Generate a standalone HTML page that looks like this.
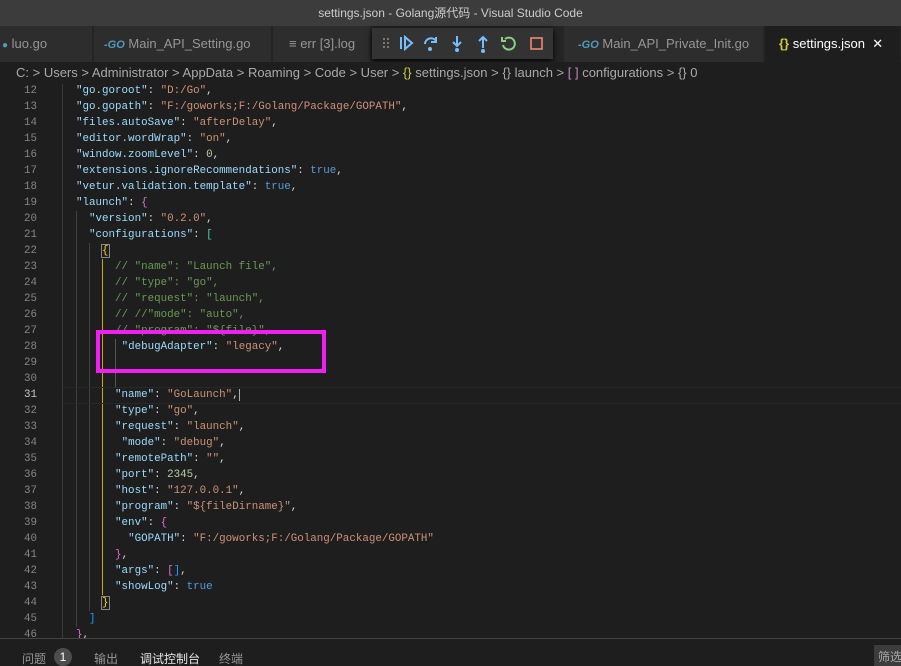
<!DOCTYPE html>
<html><head><meta charset="utf-8"><style>
*{margin:0;padding:0;box-sizing:border-box}
html,body{width:901px;height:666px;overflow:hidden}
body{background:#1e1e1e;position:relative;font-family:"Liberation Sans","Noto Sans CJK SC",sans-serif}
.title{position:absolute;left:0;top:0;width:901px;height:26px;background:#3c3c3c;color:#ccc;font-size:12px;text-align:center;line-height:26px}
.tabs{position:absolute;left:0;top:26px;width:901px;height:36px;background:#252526}
.tab{position:absolute;top:0;height:36px;line-height:36px;font-size:13px;color:#969696;background:#2d2d2d;border-right:1px solid #252526;white-space:nowrap;overflow:hidden}
.go{color:#519aba;font-weight:bold;font-size:11px;font-style:italic}
.crumb{position:absolute;left:0;top:62px;width:901px;height:22px;background:#1e1e1e;color:#a9a9a9;font-size:13px;line-height:22px;padding-left:16px;white-space:nowrap}
.dbg{position:absolute;left:372px;top:28px;width:181px;height:31px;background:#333;box-shadow:0 2px 6px #000}
.code{position:absolute;left:0;top:0;font-family:"Liberation Mono",monospace;font-size:10.85px}
.ln{position:absolute;left:0;width:37px;text-align:right;color:#858585;height:16px;line-height:16px}
.l{position:absolute;left:76px;height:16px;line-height:16px;color:#d4d4d4;white-space:pre}
.k{color:#9cdcfe}.s{color:#ce9178}.n{color:#b5cea8}.b{color:#569cd6}.c{color:#6a9955}.p{color:#da70d6}.y{color:#ffd700}.g{color:#179fff}
.guide{position:absolute;width:1px;background:#404040}
.panel{position:absolute;left:0;top:638px;width:901px;height:28px;background:#1e1e1e;border-top:1px solid #444;font-size:12px;color:#969696;overflow:hidden}
</style></head><body>
<div class="title">settings.json - Golang源代码 - Visual Studio Code</div>
<div class="tabs">
 <div class="tab" style="left:0;width:93px;padding-left:2px"><span class="go" style="font-size:10px">●</span> luo.go</div>
 <div class="tab" style="left:94px;width:178px;padding-left:10px"><span class="go">‑GO</span> Main_API_Setting.go</div>
 <div class="tab" style="left:273px;width:98px;padding-left:16px">≡ err [3].log</div>
 <div class="tab" style="left:564px;width:200px;padding-left:14px"><span class="go">‑GO</span> Main_API_Private_Init.go</div>
 <div class="tab" style="left:765px;width:136px;padding-left:14px;background:#1e1e1e;color:#fff"><span style="color:#cbcb41;font-weight:bold">{}</span> settings.json &nbsp;✕</div>
</div>
<div class="dbg">
<svg width="181" height="31" viewBox="0 0 181 31">
<g fill="#777"><rect x="11" y="10" width="2" height="2"/><rect x="15" y="10" width="2" height="2"/><rect x="11" y="14" width="2" height="2"/><rect x="15" y="14" width="2" height="2"/><rect x="11" y="18" width="2" height="2"/><rect x="15" y="18" width="2" height="2"/></g>
<g stroke="#75beff" stroke-width="2" fill="none">
<line x1="29" y1="9" x2="29" y2="21"/><path d="M33 9 L40 15 L33 21 Z"/>
<path d="M53 16 A6 6 0 0 1 64 13 M64 9 L64 14 L59 14"/>
<path d="M85 8 V18 M81 14 L85 18 L89 14"/>
<path d="M111 20 V10 M107 13 L111 9 L115 13"/>
</g>
<circle cx="58" cy="21" r="2" fill="#75beff"/><circle cx="85" cy="22" r="2" fill="#75beff"/><circle cx="111" cy="23" r="2" fill="#75beff"/>
<path d="M133 11 A6 6 0 1 1 131 17 M130 9 V13 H134" stroke="#89d185" stroke-width="2" fill="none"/>
<rect x="159" y="10" width="11" height="11" stroke="#f48771" stroke-width="1.6" fill="none"/>
</svg></div>
<div class="crumb">C: &gt; Users &gt; Administrator &gt; AppData &gt; Roaming &gt; Code &gt; User &gt; <span style="color:#cbcb41">{}</span> settings.json &gt; {} launch &gt; <span style="color:#c586c0">[ ]</span> configurations &gt; {} 0</div>

<div class="guide" style="left:62px;top:84px;height:554px;background:#3a3a3a"></div>
<div class="guide" style="left:76px;top:211px;height:416px"></div>
<div class="guide" style="left:89px;top:243px;height:368px"></div>
<div class="guide" style="left:102px;top:259px;height:336px;background:#c8a800"></div>
<div style="position:absolute;left:63px;top:387px;width:838px;height:17px;border-top:1px solid #282828;border-bottom:1px solid #282828"></div>

<div class="code">
<div class="ln" style="top:83px">12</div><div class="l" style="top:83px"><span class="k">"go.goroot"</span>: <span class="s">"D:/Go"</span>,</div>
<div class="ln" style="top:99px">13</div><div class="l" style="top:99px"><span class="k">"go.gopath"</span>: <span class="s">"F:/goworks;F:/Golang/Package/GOPATH"</span>,</div>
<div class="ln" style="top:115px">14</div><div class="l" style="top:115px"><span class="k">"files.autoSave"</span>: <span class="s">"afterDelay"</span>,</div>
<div class="ln" style="top:131px">15</div><div class="l" style="top:131px"><span class="k">"editor.wordWrap"</span>: <span class="s">"on"</span>,</div>
<div class="ln" style="top:147px">16</div><div class="l" style="top:147px"><span class="k">"window.zoomLevel"</span>: <span class="n">0</span>,</div>
<div class="ln" style="top:163px">17</div><div class="l" style="top:163px"><span class="k">"extensions.ignoreRecommendations"</span>: <span class="b">true</span>,</div>
<div class="ln" style="top:179px">18</div><div class="l" style="top:179px"><span class="k">"vetur.validation.template"</span>: <span class="b">true</span>,</div>
<div class="ln" style="top:195px">19</div><div class="l" style="top:195px"><span class="k">"launch"</span>: <span class="p">{</span></div>
<div class="ln" style="top:211px">20</div><div class="l" style="top:211px">  <span class="k">"version"</span>: <span class="s">"0.2.0"</span>,</div>
<div class="ln" style="top:227px">21</div><div class="l" style="top:227px">  <span class="k">"configurations"</span>: <span style="color:#4ec9b0">[</span></div>
<div class="ln" style="top:243px">22</div><div class="l" style="top:243px">    <span class="y" style="outline:1px solid #888">{</span></div>
<div class="ln" style="top:259px">23</div><div class="l c" style="top:259px">      // "name": "Launch file",</div>
<div class="ln" style="top:275px">24</div><div class="l c" style="top:275px">      // "type": "go",</div>
<div class="ln" style="top:291px">25</div><div class="l c" style="top:291px">      // "request": "launch",</div>
<div class="ln" style="top:307px">26</div><div class="l c" style="top:307px">      // //"mode": "auto",</div>
<div class="ln" style="top:323px">27</div><div class="l c" style="top:323px">      // "program": "${file}",</div>
<div class="ln" style="top:339px">28</div><div class="l" style="top:339px">       <span class="k">"debugAdapter"</span>: <span class="s">"legacy"</span>,</div>
<div class="ln" style="top:355px">29</div>
<div class="ln" style="top:371px">30</div>
<div class="ln" style="top:387px;color:#c6c6c6">31</div><div class="l" style="top:387px">      <span class="k">"name"</span>: <span class="s">"GoLaunch"</span>,<span style="border-left:1px solid #aeafad"></span></div>
<div class="ln" style="top:403px">32</div><div class="l" style="top:403px">      <span class="k">"type"</span>: <span class="s">"go"</span>,</div>
<div class="ln" style="top:419px">33</div><div class="l" style="top:419px">      <span class="k">"request"</span>: <span class="s">"launch"</span>,</div>
<div class="ln" style="top:435px">34</div><div class="l" style="top:435px">       <span class="k">"mode"</span>: <span class="s">"debug"</span>,</div>
<div class="ln" style="top:451px">35</div><div class="l" style="top:451px">      <span class="k">"remotePath"</span>: <span class="s">""</span>,</div>
<div class="ln" style="top:467px">36</div><div class="l" style="top:467px">      <span class="k">"port"</span>: <span class="n">2345</span>,</div>
<div class="ln" style="top:483px">37</div><div class="l" style="top:483px">      <span class="k">"host"</span>: <span class="s">"127.0.0.1"</span>,</div>
<div class="ln" style="top:499px">38</div><div class="l" style="top:499px">      <span class="k">"program"</span>: <span class="s">"${fileDirname}"</span>,</div>
<div class="ln" style="top:515px">39</div><div class="l" style="top:515px">      <span class="k">"env"</span>: <span class="p">{</span></div>
<div class="ln" style="top:531px">40</div><div class="l" style="top:531px">        <span class="k">"GOPATH"</span>: <span class="s">"F:/goworks;F:/Golang/Package/GOPATH"</span></div>
<div class="ln" style="top:547px">41</div><div class="l" style="top:547px">      <span class="p">}</span>,</div>
<div class="ln" style="top:563px">42</div><div class="l" style="top:563px">      <span class="k">"args"</span>: <span class="p">[</span><span class="g">]</span>,</div>
<div class="ln" style="top:579px">43</div><div class="l" style="top:579px">      <span class="k">"showLog"</span>: <span class="b">true</span></div>
<div class="ln" style="top:595px">44</div><div class="l" style="top:595px">    <span class="y" style="outline:1px solid #888">}</span></div>
<div class="ln" style="top:611px">45</div><div class="l" style="top:611px">  <span class="g">]</span></div>
<div class="ln" style="top:627px">46</div><div class="l" style="top:627px"><span class="p">}</span>,</div>
</div>
<div style="position:absolute;left:115px;top:339px;width:1px;height:48px;background:#555"></div>
<div style="position:absolute;left:96px;top:330px;width:230px;height:43px;border:4px solid #f21ef2"></div>

<div class="panel">
 <span style="position:absolute;left:22px;top:11px">问题</span>
 <span style="position:absolute;left:54px;top:9px;width:18px;height:18px;border-radius:9px;background:#4d4d4d;color:#fff;text-align:center;line-height:18px">1</span>
 <span style="position:absolute;left:94px;top:11px">输出</span>
 <span style="position:absolute;left:140px;top:11px;color:#e7e7e7">调试控制台</span>
 <span style="position:absolute;left:219px;top:11px">终端</span>
 <span style="position:absolute;left:874px;top:6px;width:27px;height:22px;background:#3c3c3c;color:#aaa;line-height:24px;padding-left:4px;white-space:nowrap;overflow:hidden">筛选</span>
</div>
</body></html>
